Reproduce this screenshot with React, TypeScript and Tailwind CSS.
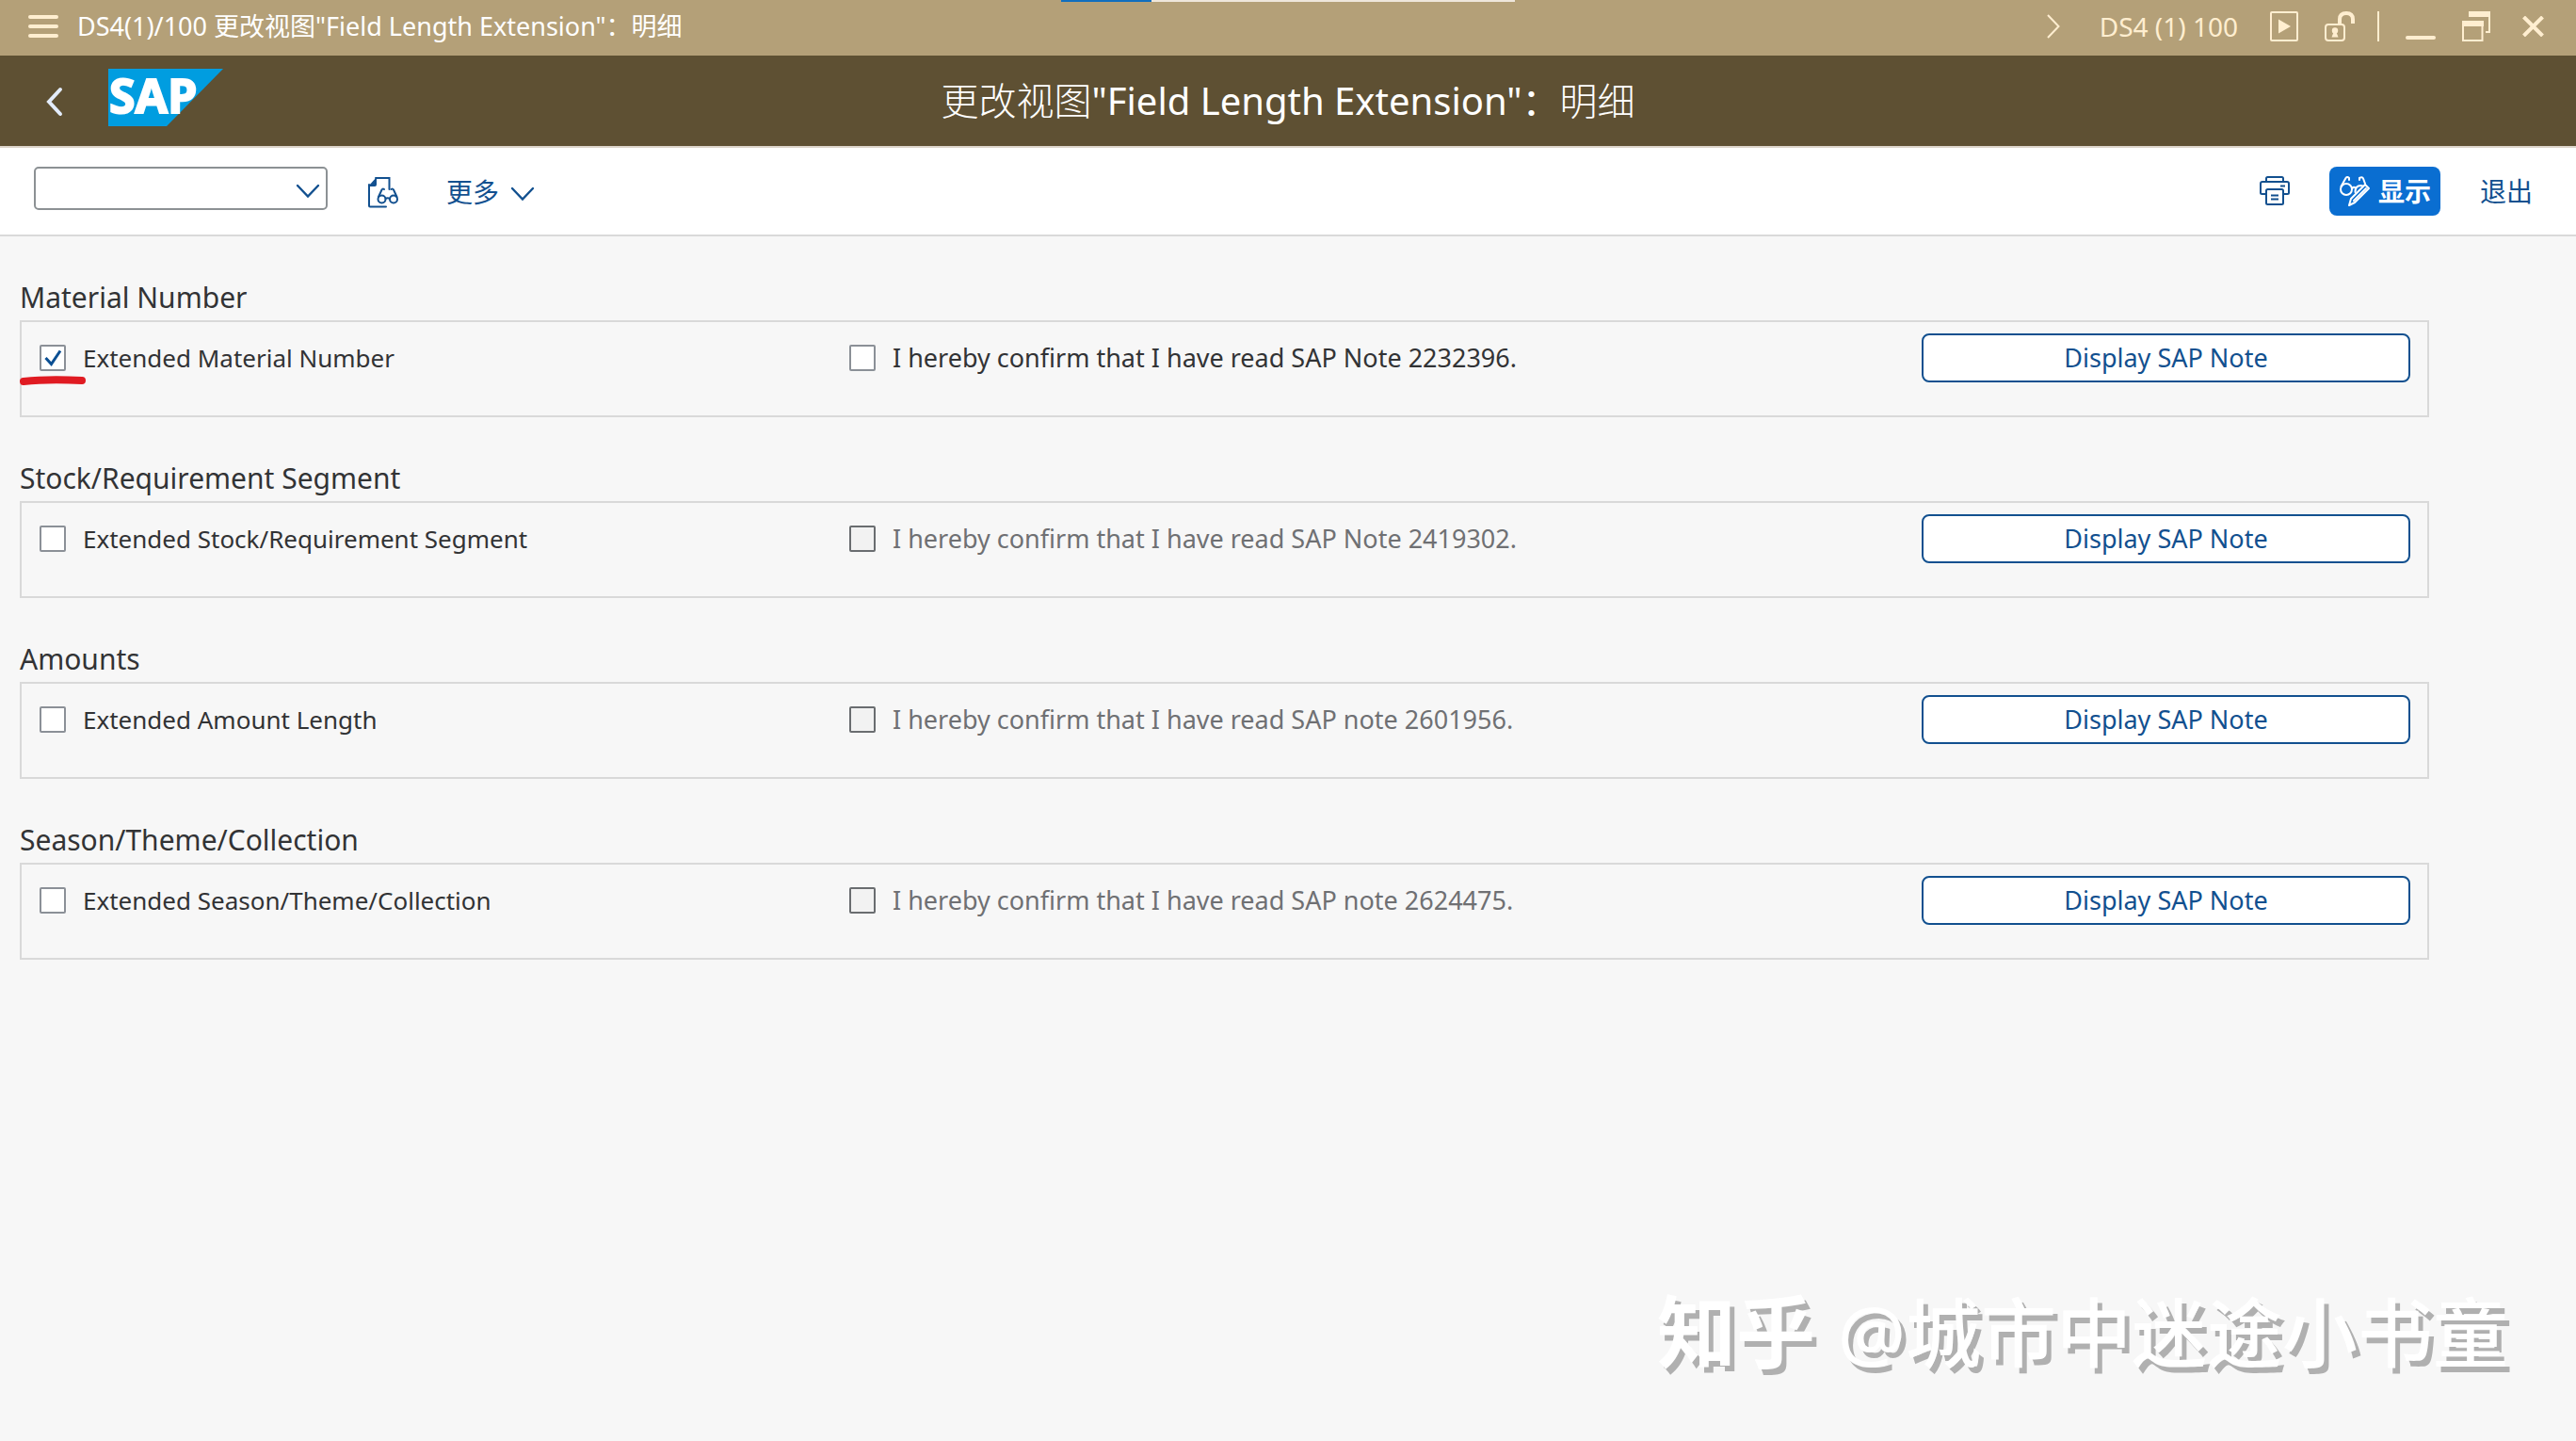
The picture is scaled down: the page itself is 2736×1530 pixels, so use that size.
import { useState } from "react";

type Section = {
  id: string;
  title: string;
  option: string;
  confirm: string;
};

const sections: Section[] = [
  {
    id: "material",
    title: "Material Number",
    option: "Extended Material Number",
    confirm: "I hereby confirm that I have read SAP Note 2232396.",
  },
  {
    id: "stock",
    title: "Stock/Requirement Segment",
    option: "Extended Stock/Requirement Segment",
    confirm: "I hereby confirm that I have read SAP Note 2419302.",
  },
  {
    id: "amounts",
    title: "Amounts",
    option: "Extended Amount Length",
    confirm: "I hereby confirm that I have read SAP note 2601956.",
  },
  {
    id: "season",
    title: "Season/Theme/Collection",
    option: "Extended Season/Theme/Collection",
    confirm: "I hereby confirm that I have read SAP note 2624475.",
  },
];

const ChevronDown = () => (
  <svg width="26" height="16" viewBox="0 0 26 16" fill="none" stroke="currentColor" strokeWidth="2.4" strokeLinecap="round">
    <path d="M2 2l11 11.500L24 2" />
  </svg>
);

const SapLogo = () => (
  <svg width="122" height="61" viewBox="0 0 122 61" role="img" aria-label="SAP" className="overflow-visible">
    <path d="M0 0h122L62 61H0z" fill="#009de0" />
    <text x="1" y="47" fontSize="50" fontWeight="700" fill="#fff" stroke="#fff" strokeWidth="2" className="font-['Liberation_Sans_Narrow','Noto_Sans',sans-serif]">
      SAP
    </text>
  </svg>
);

const DocumentGlassesIcon = () => (
  <svg width="34" height="34" viewBox="0 0 34 34" fill="none" stroke="currentColor" strokeWidth="2">
    <path d="M9 2h14.500v12M2 9v22.500q0 1 1 1h17" strokeLinecap="round" />
    <path d="M1 11L10 1v8q0 2-2 2z" fill="currentColor" stroke="none" />
    <circle cx="15.500" cy="24.500" r="4" />
    <circle cx="28" cy="24.500" r="4" />
    <path d="M19.500 24q2-1.500 4.500 0M12 22l3.500-7.500q.8-1.500 2.500-.5M31.500 22L28 14.500q-.8-1.500-2.500-.5" strokeLinecap="round" />
  </svg>
);

const PrinterIcon = () => (
  <svg width="32" height="32" viewBox="0 0 32 32" fill="none" stroke="currentColor" strokeWidth="2" strokeLinejoin="round">
    <path d="M7 6V2.500Q7 1 8.500 1h15Q25 1 25 2.500V6" />
    <path d="M6.500 19H2.500Q1 19 1 17.500V8q0-2 2-2h26q2 0 2 2v9.500q0 1.500-1.500 1.500H25.500" />
    <path d="M22 10.500h5" />
    <rect x="7" y="14" width="18" height="16" rx="1.500" />
    <path d="M12 20.500h8M12 24.500h8" />
  </svg>
);

const GlassesPencilIcon = () => (
  <svg width="34" height="34" viewBox="0 0 34 34" fill="none" stroke="currentColor" strokeWidth="2" strokeLinecap="round" strokeLinejoin="round">
    <circle cx="8" cy="15" r="6" />
    <path d="M2.500 12L7.500 3q1.500-2 3.500 0v2M14 14q2-2 4-.5M28 9l-2-5.500q-1-2-4-.5v2M17.500 18q0-7 6-7l2 .5" />
    <path d="M28 10l4 4L17 29l-6 3 2-7z" />
    <path d="M29 14L16 27" />
  </svg>
);

const PlayBoxIcon = () => (
  <svg width="30" height="32" viewBox="0 0 30 32" fill="none" stroke="currentColor" strokeWidth="2">
    <rect x="1" y="1" width="28" height="30" rx="1" />
    <path d="M9 8.500v15L22 16z" fill="currentColor" stroke="none" />
  </svg>
);

const UnlockIcon = () => (
  <svg width="32" height="32" viewBox="0 0 32 32" fill="none" stroke="currentColor">
    <rect x="1" y="14" width="20" height="17" rx="3" strokeWidth="2" />
    <path d="M16 14V8.500Q16 2 23 2t7 6.500V13" strokeWidth="4" />
    <circle cx="11" cy="20.500" r="3.200" fill="currentColor" stroke="none" />
    <path d="M10 21h2l2.500 6.500h-7z" fill="currentColor" stroke="none" />
  </svg>
);

const RestoreIcon = () => (
  <svg width="30" height="32" viewBox="0 0 30 32" fill="none" stroke="currentColor" strokeWidth="2">
    <path d="M8 6V3M29 3v19h-4" />
    <path d="M7 0h23v6H7zM0 10h23v6H0z" fill="currentColor" stroke="none" />
    <path d="M1 14v17h20.500V14" />
  </svg>
);

type CheckboxProps = {
  id: string;
  label: string;
  checked: boolean;
  disabled?: boolean;
  onChange: () => void;
};

const Checkbox = ({ id, label, checked, disabled, onChange }: CheckboxProps) => (
  <div className="flex items-center">
    <span className="relative h-7 w-7 shrink-0">
      <input
        id={id}
        type="checkbox"
        checked={checked}
        disabled={disabled}
        onChange={onChange}
        className="block h-7 w-7 appearance-none rounded-xs border-2 border-[#8b9097] bg-white disabled:border-[#6a6d70] disabled:bg-[#f2f2f2]"
      />
      {checked && (
        <svg className="pointer-events-none absolute inset-0 text-[#0b4f93]" width="28" height="28" viewBox="0 0 28 28" fill="none" stroke="currentColor" strokeWidth="3">
          <path d="M6.500 14l6 6.500L22 6.500" />
        </svg>
      )}
    </span>
    <label
      htmlFor={id}
      className={disabled ? "pl-[18px] whitespace-nowrap text-[#6f7073]" : "pl-[18px] whitespace-nowrap text-[#323335]"}
    >
      {label}
    </label>
  </div>
);

const App = () => {
  const [enabled, setEnabled] = useState<string[]>(["material"]);
  const [confirmed, setConfirmed] = useState<string[]>([]);

  const toggle = (list: string[], id: string) =>
    list.includes(id) ? list.filter((item) => item !== id) : [...list, id];

  return (
    <div className="relative min-h-screen bg-[#f7f7f7] font-['Noto_Sans','Noto_Sans_CJK_SC',sans-serif] text-[28px] leading-9">
      {/* window bar */}
      <div className="flex h-[59px] items-center justify-between bg-[#b4a078] pr-[34px] pb-[3px] pl-[30px] text-[#ffeed0]">
        <div className="flex items-center">
          <button aria-label="Menu" className="flex w-8 flex-col gap-1.5">
            <span className="h-1 w-full rounded-xs bg-current" />
            <span className="h-1 w-full rounded-xs bg-current" />
            <span className="h-1 w-full rounded-xs bg-current" />
          </button>
          <span className="pl-5 text-[27px] text-white">DS4(1)/100 更改视图"Field Length Extension"：明细</span>
        </div>
        <div className="flex items-center">
          <button aria-label="Expand">
            <svg width="14" height="26" viewBox="0 0 14 26" fill="none" stroke="currentColor" strokeWidth="2">
              <path d="M1 1l11.500 12L1 25" />
            </svg>
          </button>
          <span className="pr-[34px] pl-[42px]">DS4 (1) 100</span>
          <button aria-label="New session" className="pr-7">
            <PlayBoxIcon />
          </button>
          <button aria-label="Unlock" className="pr-6">
            <UnlockIcon />
          </button>
          <span className="h-8 w-0.5 bg-current" />
          <button aria-label="Minimize" className="flex h-8 items-end pr-7 pl-7 pb-0.5">
            <span className="h-1 w-8 rounded-xs bg-current" />
          </button>
          <button aria-label="Restore" className="pr-[34px]">
            <RestoreIcon />
          </button>
          <button aria-label="Close">
            <svg width="23" height="22" viewBox="0 0 23 22" fill="none" stroke="currentColor" strokeWidth="4">
              <path d="M1.500 1l20 20M21.500 1l-20 20" />
            </svg>
          </button>
        </div>
      </div>
      <div className="absolute top-0 left-1/2 flex h-0.5 w-[482px] -translate-x-1/2 bg-[#eee6db]">
        <span className="w-24 bg-[#106ebe]" />
      </div>

      {/* title bar */}
      <header className="grid h-[98px] grid-cols-[1fr_auto_1fr] items-center border-b-2 border-[#ddd5cb] bg-[#5e5033] text-white">
        <div className="flex items-center pb-2 pl-12">
          <button aria-label="Back" className="pt-2.5 pr-12 text-[#e3ecfb]">
            <svg width="19" height="32" viewBox="0 0 19 32" fill="none" stroke="currentColor" strokeWidth="4" strokeLinecap="round">
              <path d="M16 3L4 16l12 13" />
            </svg>
          </button>
          <SapLogo />
        </div>
        <h1 className="text-[40px] leading-[56px]">
          <span className="font-light">更改视图</span>"Field Length Extension"：<span className="font-light">明细</span>
        </h1>
      </header>

      {/* toolbar */}
      <div className="flex h-[94px] items-start justify-between border-b-2 border-[#d9d9d9] bg-white pt-5 pr-[46px] pl-9 text-[#12508f]">
        <div className="flex items-start">
          <div className="relative">
            <select aria-label="Command" className="block h-[46px] w-[312px] appearance-none rounded-[5px] border-2 border-[#8c9194] bg-white">
              <option></option>
            </select>
            <span className="pointer-events-none absolute top-[18px] right-2">
              <ChevronDown />
            </span>
          </div>
          <button aria-label="Display document" className="flex h-[54px] items-center pr-[50px] pl-[42px]">
            <DocumentGlassesIcon />
          </button>
          <button className="flex h-[54px] items-center gap-3">
            更多
            <span className="pt-1">
              <ChevronDown />
            </span>
          </button>
        </div>
        <div className="flex items-center">
          <button aria-label="Print" className="pr-[42px]">
            <PrinterIcon />
          </button>
          <button className="flex h-[52px] items-center gap-2 rounded-lg bg-[#0a6ed1] px-2.5 font-bold text-white">
            <GlassesPencilIcon />
            显示
          </button>
          <button className="pl-[42px]">退出</button>
        </div>
      </div>

      <main className="flex flex-col gap-[41px] pt-[41px] pr-[156px] pl-[21px]">
        {sections.map((section, index) => {
          const isEnabled = enabled.includes(section.id);
          return (
            <section key={section.id}>
              <h2 className="h-12 text-[30px] leading-[48px] text-[#323335]">{section.title}</h2>
              <div className="relative grid h-[103px] grid-cols-[860px_1fr_519px] items-start border-2 border-[#d9d9d9] pt-3 pr-[18px] pl-[19px]">
                <div className="flex h-[52px] items-center text-[26px]">
                  <Checkbox
                    id={`${section.id}-extended`}
                    label={section.option}
                    checked={isEnabled}
                    onChange={() => setEnabled(toggle(enabled, section.id))}
                  />
                </div>
                <div className="flex h-[52px] items-center text-[27px]">
                  <Checkbox
                    id={`${section.id}-confirm`}
                    label={section.confirm}
                    checked={confirmed.includes(section.id)}
                    disabled={!isEnabled}
                    onChange={() => setConfirmed(toggle(confirmed, section.id))}
                  />
                </div>
                <button className="h-[52px] rounded-lg border-2 border-[#12508f] bg-white text-[27px] text-[#12508f]">
                  Display SAP Note
                </button>
                {index === 0 && (
                  <svg className="pointer-events-none absolute top-14 -left-0.5" width="72" height="12" viewBox="0 0 72 12" fill="none" stroke="#e01b22" strokeWidth="8" strokeLinecap="round">
                    <path d="M4 7Q30 4 66 6" />
                  </svg>
                )}
              </div>
            </section>
          );
        })}
      </main>

      {/* watermark */}
      <div className="pointer-events-none absolute right-[72px] bottom-14 flex items-center gap-6 text-[80px] leading-[120px] font-medium whitespace-nowrap text-white [text-shadow:5px_6px_0_#b0b0b0]">
        <span className="text-[84px] font-bold">知乎</span>
        <span>@城市中迷途小书童</span>
      </div>
    </div>
  );
};

export default App;
